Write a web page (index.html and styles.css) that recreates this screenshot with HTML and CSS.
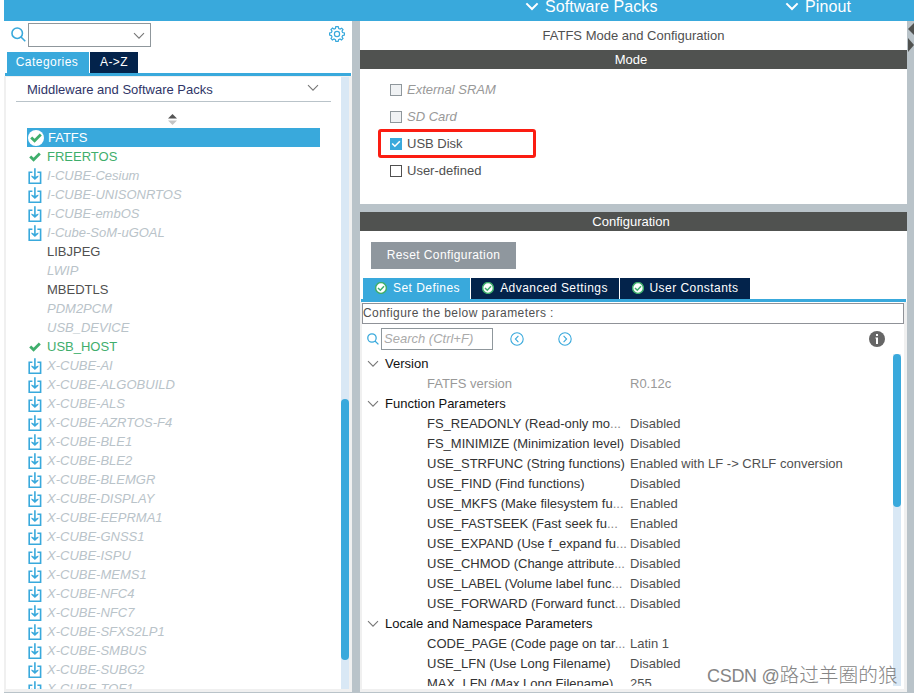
FILE: index.html
```html
<!DOCTYPE html>
<html lang="en">
<head>
<meta charset="utf-8">
<title>FATFS Mode and Configuration</title>
<link rel="stylesheet" href="styles.css">
</head>
<body>
<svg class="defs" aria-hidden="true">
  <symbol id="search" viewBox="0 0 14 14"><circle cx="5.8" cy="5.8" r="4.9"/><path d="M9.3 9.3L13.3 13.3"/></symbol>
  <symbol id="chev" viewBox="0 0 12 8"><path d="M1 1.2L6 6.2L11 1.2"/></symbol>
  <symbol id="pack" viewBox="0 0 14 16"><path d="M4.4 4.2H1.2V15.2H12.6V4.2H9.4"/><path d="M6.9 .3V10" /><path class="fill" d="M3.4 7.4L6.9 9L10.4 7.4V8.8L6.9 12L3.4 8.8Z"/></symbol>
  <symbol id="tick" viewBox="0 0 12 10"><path d="M1.2 4.4L4.6 7.8L10.8 1.6"/></symbol>
  <symbol id="badge" viewBox="0 0 12 12"><circle cx="6" cy="6" r="5.4"/><path d="M3 6L5.3 8.2L9 4.3"/></symbol>
</svg>
<header class="topbar">
  <div class="menu packs"><svg class="mchev"><use href="#chev"/></svg><span>Software Packs</span></div>
  <div class="menu pinout"><svg class="mchev"><use href="#chev"/></svg><span>Pinout</span></div>
</header>
<div class="workspace">
  <aside class="side">
    <div class="finder">
      <svg class="mag"><use href="#search"/></svg>
      <div class="combo"><svg class="chev"><use href="#chev"/></svg></div>
      <svg class="gear" viewBox="0 0 16 16"><path d="M6.8 .7H9.2L9.7 2.5L11.2 3.1L12.7 2.2L14 3.6L13 5.1L13.6 6.5L15.4 6.9V9.1L13.6 9.6L13 11L14 12.5L12.5 14L11 13L9.6 13.6L9.2 15.3H6.8L6.4 13.6L5 13L3.4 14L2 12.5L3 11L2.4 9.6L.6 9.1V6.9L2.4 6.5L3 5.1L2 3.6L3.5 2.1L5 3.1L6.4 2.5Z"/><circle cx="8" cy="8" r="2.6"/></svg>
    </div>
    <div class="tabs"><div class="tab active cat">Categories</div><div class="tab az">A-&gt;Z</div></div>
    <div class="cats">
      <div class="catbody">
        <div class="group"><span>Middleware and Software Packs</span><svg class="chev"><use href="#chev"/></svg></div>
        <div class="sort"><svg viewBox="0 0 9 11"><path d="M0 4.5L4.5 0L9 4.5Z" fill="#555"/><path d="M0 6.5H9L4.5 11Z" fill="#c4c4c4"/></svg></div>
        <ul class="list">
          <li class="sel"><i class="disc"><svg class="tick"><use href="#tick"/></svg></i><span>FATFS</span></li>
          <li class="on"><svg class="tick"><use href="#tick"/></svg><span>FREERTOS</span></li>
          <li class="pk"><svg class="pack"><use href="#pack"/></svg><span>I-CUBE-Cesium</span></li>
          <li class="pk"><svg class="pack"><use href="#pack"/></svg><span>I-CUBE-UNISONRTOS</span></li>
          <li class="pk"><svg class="pack"><use href="#pack"/></svg><span>I-CUBE-embOS</span></li>
          <li class="pk"><svg class="pack"><use href="#pack"/></svg><span>I-Cube-SoM-uGOAL</span></li>
          <li class="plain"><span>LIBJPEG</span></li>
          <li class="off"><span>LWIP</span></li>
          <li class="plain"><span>MBEDTLS</span></li>
          <li class="off"><span>PDM2PCM</span></li>
          <li class="off"><span>USB_DEVICE</span></li>
          <li class="on"><svg class="tick"><use href="#tick"/></svg><span>USB_HOST</span></li>
          <li class="pk"><svg class="pack"><use href="#pack"/></svg><span>X-CUBE-AI</span></li>
          <li class="pk"><svg class="pack"><use href="#pack"/></svg><span>X-CUBE-ALGOBUILD</span></li>
          <li class="pk"><svg class="pack"><use href="#pack"/></svg><span>X-CUBE-ALS</span></li>
          <li class="pk"><svg class="pack"><use href="#pack"/></svg><span>X-CUBE-AZRTOS-F4</span></li>
          <li class="pk"><svg class="pack"><use href="#pack"/></svg><span>X-CUBE-BLE1</span></li>
          <li class="pk"><svg class="pack"><use href="#pack"/></svg><span>X-CUBE-BLE2</span></li>
          <li class="pk"><svg class="pack"><use href="#pack"/></svg><span>X-CUBE-BLEMGR</span></li>
          <li class="pk"><svg class="pack"><use href="#pack"/></svg><span>X-CUBE-DISPLAY</span></li>
          <li class="pk"><svg class="pack"><use href="#pack"/></svg><span>X-CUBE-EEPRMA1</span></li>
          <li class="pk"><svg class="pack"><use href="#pack"/></svg><span>X-CUBE-GNSS1</span></li>
          <li class="pk"><svg class="pack"><use href="#pack"/></svg><span>X-CUBE-ISPU</span></li>
          <li class="pk"><svg class="pack"><use href="#pack"/></svg><span>X-CUBE-MEMS1</span></li>
          <li class="pk"><svg class="pack"><use href="#pack"/></svg><span>X-CUBE-NFC4</span></li>
          <li class="pk"><svg class="pack"><use href="#pack"/></svg><span>X-CUBE-NFC7</span></li>
          <li class="pk"><svg class="pack"><use href="#pack"/></svg><span>X-CUBE-SFXS2LP1</span></li>
          <li class="pk"><svg class="pack"><use href="#pack"/></svg><span>X-CUBE-SMBUS</span></li>
          <li class="pk"><svg class="pack"><use href="#pack"/></svg><span>X-CUBE-SUBG2</span></li>
          <li class="pk"><svg class="pack"><use href="#pack"/></svg><span>X-CUBE-TOF1</span></li>
        </ul>
      </div>
      <div class="track"><div class="thumb"></div></div>
    </div>
  </aside>
  <main class="main">
    <section class="mode">
      <h1>FATFS Mode and Configuration</h1>
      <div class="bar">Mode</div>
      <div class="opts">
        <div class="opt dis"><i class="box"></i><span>External SRAM</span></div>
        <div class="opt dis"><i class="box"></i><span>SD Card</span></div>
        <div class="opt"><i class="box checked"><svg><use href="#tick"/></svg></i><span>USB Disk</span><b class="mark"></b></div>
        <div class="opt"><i class="box"></i><span>User-defined</span></div>
      </div>
    </section>
    <section class="config">
      <div class="bar cfg">Configuration</div>
      <div class="reset">Reset Configuration</div>
      <div class="tabs ctabs">
        <div class="tab active t1"><svg><use href="#badge"/></svg>Set Defines</div>
        <div class="tab t2"><svg><use href="#badge"/></svg>Advanced Settings</div>
        <div class="tab t3"><svg><use href="#badge"/></svg>User Constants</div>
      </div>
      <div class="pane">
        <div class="desc">Configure the below parameters :</div>
        <div class="tools">
          <svg class="mag sm"><use href="#search"/></svg>
          <div class="search">Search (Ctrl+F)</div>
          <svg class="nav prev" viewBox="0 0 14 14"><circle cx="7" cy="7" r="6.2"/><path d="M8.4 3.9L5.4 7L8.4 10.1"/></svg>
          <svg class="nav" viewBox="0 0 14 14"><circle cx="7" cy="7" r="6.2"/><path d="M5.6 3.9L8.6 7L5.6 10.1"/></svg>
          <svg class="info" viewBox="0 0 16 16"><circle cx="8" cy="8" r="8" fill="#666"/><path d="M7 3H9V5H7ZM6.4 6.4H9V13H7V7.4H6.4Z" fill="#fff"/></svg>
        </div>
        <div class="params">
          <div class="tree">
            <div class="sec"><svg class="chev"><use href="#chev"/></svg><span>Version</span></div>
            <div class="row ro"><span class="k">FATFS version</span><span>R0.12c</span></div>
            <div class="sec"><svg class="chev"><use href="#chev"/></svg><span>Function Parameters</span></div>
            <div class="row"><span class="k">FS_READONLY (Read-only mo<em>...</em></span><span>Disabled</span></div>
            <div class="row"><span class="k">FS_MINIMIZE (Minimization level)</span><span>Disabled</span></div>
            <div class="row"><span class="k">USE_STRFUNC (String functions)</span><span>Enabled with LF -&gt; CRLF conversion</span></div>
            <div class="row"><span class="k">USE_FIND (Find functions)</span><span>Disabled</span></div>
            <div class="row"><span class="k">USE_MKFS (Make filesystem fu<em>...</em></span><span>Enabled</span></div>
            <div class="row"><span class="k">USE_FASTSEEK (Fast seek fu<em>...</em></span><span>Enabled</span></div>
            <div class="row"><span class="k">USE_EXPAND (Use f_expand fu<em>...</em></span><span>Disabled</span></div>
            <div class="row"><span class="k">USE_CHMOD (Change attribute<em>...</em></span><span>Disabled</span></div>
            <div class="row"><span class="k">USE_LABEL (Volume label func<em>...</em></span><span>Disabled</span></div>
            <div class="row"><span class="k">USE_FORWARD (Forward funct<em>...</em></span><span>Disabled</span></div>
            <div class="sec"><svg class="chev"><use href="#chev"/></svg><span>Locale and Namespace Parameters</span></div>
            <div class="row"><span class="k">CODE_PAGE (Code page on tar<em>...</em></span><span>Latin 1</span></div>
            <div class="row"><span class="k">USE_LFN (Use Long Filename)</span><span>Disabled</span></div>
            <div class="row"><span class="k">MAX_LFN (Max Long Filename)</span><span>255</span></div>
          </div>
          <div class="track"><div class="thumb"></div></div>
        </div>
      </div>
    </section>
  </main>
  <div class="edge"><svg viewBox="0 0 7 32"><path d="M7 2V14L1 8Z"/><path d="M1 17L7 24L1 31Z"/></svg></div>
</div>
<div class="watermark"><span class="latin">CSDN @</span>路过羊圈的狼</div>
</body>
</html>
```
FILE: styles.css
```css
* { box-sizing: border-box; }
body { margin: 0; width: 914px; height: 693px; overflow: hidden; position: relative; background: #fff; padding-left: 4px; display: flex; flex-direction: column; font: 13px/19px "Liberation Sans", Arial, sans-serif; color: #505050; }
svg { display: block; flex: none; fill: none; stroke: #39a9dc; stroke-width: 1.5; }
i, em { font-style: normal; }
.defs { position: absolute; width: 0; height: 0; }
span, .tab, .bar, h1, .desc, .reset, .search { white-space: pre; }

.topbar { height: 21px; flex: none; background: #39a9dc; color: #fff; display: flex; font-size: 16px; line-height: 14px; padding-left: 521px; }
.menu { display: flex; width: 260px; flex: none; }
.pinout { width: 129px; }
.menu span { letter-spacing: .1px; }
.mchev { width: 14px; height: 9px; margin: 2px 6px 0 0; stroke: #fff; stroke-width: 1.8; }

.workspace { flex: 1; min-height: 0; display: flex; background: #b9c3c9; padding-bottom: 1px; }
.side { width: 348px; flex: none; background: #fff; display: flex; flex-direction: column; }
.finder { height: 31px; flex: none; display: flex; padding: 2px 7px 0 7px; }
.mag { width: 15px; height: 15px; margin-top: 4px; }
.combo { width: 123px; height: 24px; border: 1px solid #8f979c; margin-left: 2px; padding: 8px 5px 0 0; display: flex; justify-content: flex-end; }
.chev { width: 12px; height: 8px; stroke: #777; stroke-width: 1.1; }
.gear { width: 16px; height: 16px; margin: 3px 0 0 auto; stroke-width: 1.2; }

.tabs { display: flex; gap: 1px; flex: none; border-bottom: 3px solid #39a9dc; margin: 0 1px; padding-left: 2px; }
.tab { height: 21px; background: #03234b; color: #fff; font-size: 12px; line-height: 21px; letter-spacing: .45px; display: flex; justify-content: center; }
.tab.active { background: #39a9dc; }
.cat { width: 82px; padding-right: 2px; }
.az { width: 48px; }
.cats { flex: 1; min-height: 0; border: solid #f0f0f0; border-width: 1px 3px 3px 2px; display: flex; overflow: hidden; }
.catbody { width: 335px; flex: none; padding: 0 10px; }
.group { height: 25px; border-bottom: 1px solid #b9c3c9; padding: 0 12px 0 11px; line-height: 25px; display: flex; justify-content: space-between; color: #2f3567; }
.group .chev { margin-top: 7px; }
.sort { height: 26px; padding: 12px 0 0 152px; }
.sort svg { width: 9px; height: 11px; stroke: none; }
.list { list-style: none; margin: 0 11px; padding: 0; }
.list li { height: 19px; display: flex; align-items: center; color: #b9c3c9; font-style: italic; }
.list .sel { background: #39a9dc; color: #fff; font-style: normal; padding-left: 1px; }
.disc { width: 16px; height: 16px; border-radius: 50%; background: #fff; padding: 3px 2px; margin-right: 4px; }
.tick { width: 12px; height: 10px; stroke: #3fae6c; stroke-width: 2.8; }
.list .on { color: #3fae6c; font-style: normal; }
.on .tick { margin: 0 6px 0 2px; }
.pack { width: 14px; height: 16px; margin: 0 5px 0 1px; stroke-width: 1.6; }
.fill { fill: #39a9dc; stroke: none; }
.plain, .off { padding-left: 20px; }
.list .plain { color: #505050; font-style: normal; }
.track { width: 8px; background: #d9e8f5; flex: none; }
.thumb { background: #39a9dc; border-radius: 4px; }
.side .thumb { height: 261px; margin-top: 322px; }

.main { width: 547px; margin-left: 8px; flex: none; display: flex; flex-direction: column; gap: 8px; }
.mode { height: 183px; flex: none; background: #fff; }
h1 { margin: 0; height: 29px; line-height: 29px; text-align: center; font-size: 13px; font-weight: 400; }
.bar { height: 19px; flex: none; background: #505250; color: #fff; text-align: center; padding-right: 5px; }
.opts { padding: 7px 0 0 30px; }
.opt { height: 27px; display: flex; align-items: center; position: relative; gap: 5px; }
.box { width: 12px; height: 12px; border: 1px solid #505050; }
.dis { color: #999; font-style: italic; }
.dis .box { background: #f0f2f4; border-color: #8f979c; }
.box.checked { background: #39a9dc; border: 0; padding: 2px 1px; }
.checked svg { width: 10px; height: 8px; stroke: #fff; stroke-width: 2; }
.mark { position: absolute; left: -12px; top: -1px; width: 158px; height: 29px; border: 3px solid #fb1d12; border-radius: 3px; }
.config { flex: 1; min-height: 0; background: #fff; display: flex; flex-direction: column; }
.reset { width: 145px; height: 27px; flex: none; margin: 11px 0 9px 11px; background: #8f979e; color: #fff; font-size: 12px; line-height: 27px; text-align: center; letter-spacing: .4px; }
.ctabs svg { width: 12px; height: 12px; margin: 4px 6px 0 0; fill: #fff; stroke: #3fae6c; }
.t1 { width: 107px; padding-left: 2px; } .t2 { width: 148px; } .t3 { width: 130px; }
.pane { flex: 1; min-height: 0; border: solid #f0f0f0; border-width: 0 3px 3px 2px; padding: 1px 0 3px; display: flex; flex-direction: column; }
.desc { height: 21px; flex: none; border: 1px solid #8f9298; font-size: 12px; line-height: 19px; letter-spacing: .42px; }
.tools { height: 30px; flex: none; display: flex; padding: 4px 19px 0 5px; }
.sm { width: 12px; height: 12px; margin-top: 5px; }
.search { width: 112px; height: 22px; border: 1px solid #8f979c; margin: 0 17px 0 2px; padding-left: 2px; line-height: 20px; font-style: italic; color: #aaa; }
.nav { width: 14px; height: 14px; margin-top: 4px; stroke-width: 1.1; }
.prev { margin-right: 34px; }
.info { width: 16px; height: 16px; margin: 3px 0 0 auto; stroke: none; }
.params { flex: 1; min-height: 0; display: flex; justify-content: space-between; padding-right: 3px; overflow: hidden; }
.tree { line-height: 19px; }
.sec { height: 20px; display: flex; align-items: flex-start; gap: 6px; padding-left: 5px; color: #111; }
.sec .chev { margin-top: 6px; }
.row { height: 20px; display: flex; padding-left: 65px; }
.k { width: 203px; color: #333; }
.k em { color: #888; }
.ro, .ro .k { color: #999; }
.main .thumb { height: 153px; }
.edge { width: 7px; }
.edge svg { width: 7px; height: 32px; stroke: none; fill: #505250; }
.watermark { position: absolute; left: 707px; top: 662px; font: 300 19.7px/24px "Noto Sans CJK SC", sans-serif; color: #858585; white-space: nowrap; }
.latin { font: 18px "Liberation Sans", Arial, sans-serif; letter-spacing: -.3px; }
```
